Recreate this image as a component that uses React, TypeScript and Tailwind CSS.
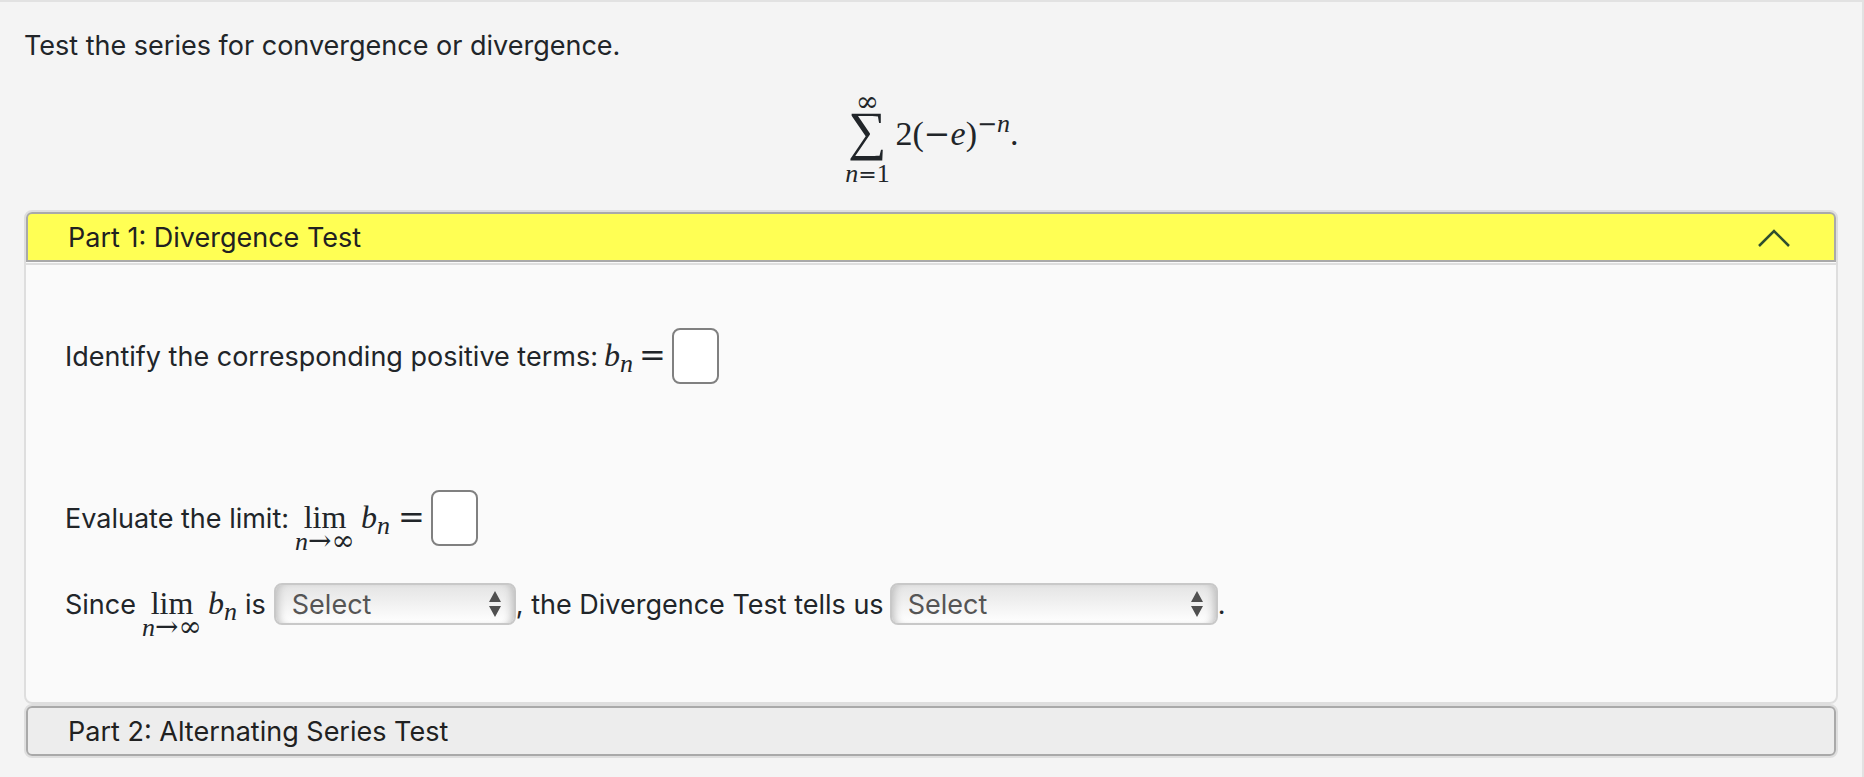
import { useState } from "react";
import type { ReactNode } from "react";

const serif = "font-['Liberation_Serif','DejaVu_Serif',serif]";
const operator = "font-['DejaVu_Serif','Liberation_Serif',serif] not-italic";

function Bn() {
  return (
    <span className={`${serif} text-[32px] leading-10 italic`}>
      b<sub className="text-[26px] leading-none">n</sub>
    </span>
  );
}

function Equals() {
  return <span className={`${operator} text-[32px] leading-10`}>=</span>;
}

function Lim() {
  return (
    <span className={`${serif} inline-flex w-15 flex-col items-center`}>
      <span className="text-[32px] leading-8">lim</span>
      <span className="h-4 text-[26px] leading-4 whitespace-nowrap">
        <i>n</i>
        <span className={`${operator} text-[28px]`}>→∞</span>
      </span>
    </span>
  );
}

function AnswerBox({ label }: { label: string }) {
  return (
    <input
      type="text"
      aria-label={label}
      className="ml-1.5 h-14 w-[47px] rounded-lg border-2 border-[#808080] bg-white px-2 leading-10"
    />
  );
}

function Choice({ label, width, options }: { label: string; width: string; options: string[] }) {
  return (
    <span className={`relative inline-flex ${width}`}>
      <select
        aria-label={label}
        defaultValue=""
        className="h-[42px] w-full appearance-none rounded-lg border-2 border-[#c8c8c8] bg-linear-to-b from-[#e4e4e4] to-white px-4 text-[#555] shadow-[inset_8px_0_8px_-6px_#bbb,inset_-8px_0_8px_-6px_#bbb]"
      >
        <option value="">Select</option>
        {options.map((option) => (
          <option key={option}>{option}</option>
        ))}
      </select>
      <svg
        aria-hidden="true"
        viewBox="0 0 14 26"
        className="pointer-events-none absolute top-2 right-3.5 h-[26px] w-3.5 fill-[#505050]"
      >
        <path d="M7 0 13 11H1ZM7 26 1 15H13Z" />
      </svg>
    </span>
  );
}

function Part({ title, open, onToggle, children }: { title: string; open: boolean; onToggle: () => void; children?: ReactNode }) {
  return (
    <section className="rounded-lg border-2 border-[#dedede] bg-[#fafafa]">
      <h2>
        <button
          type="button"
          aria-expanded={open}
          onClick={onToggle}
          className={`flex h-[50px] w-full items-center justify-between border-2 border-[#a9a9a9] pt-0.5 pr-11 pl-10 text-left text-[#212121] ${
            open ? "rounded-t-md bg-[#ffff54]" : "rounded-md bg-[#ededed]"
          }`}
        >
          {title}
          {open && (
            <svg aria-hidden="true" viewBox="0 0 32 18" className="h-[18px] w-8 fill-none stroke-[#2f4f2f] stroke-[2.5]">
              <path d="M1 17 16 2 31 17" />
            </svg>
          )}
        </button>
      </h2>
      {open && children}
    </section>
  );
}

export default function App() {
  const [openParts, setOpenParts] = useState([true, false]);
  const toggle = (index: number) => setOpenParts(openParts.map((open, i) => (i === index ? !open : open)));

  return (
    <main className="min-h-screen border-t-2 border-r-2 border-[#e2e2e2] bg-[#f4f4f4] px-6 pt-6 pb-[19px] font-['Inter','Liberation_Sans',sans-serif] text-[27px] leading-10 text-[#212529]">
      <p>Test the series for convergence or divergence.</p>

      <div className={`${serif} mt-7 flex h-[90px] items-start justify-center text-[34px] leading-10`}>
        <span className="flex w-12 flex-col items-center text-[26px] leading-4">
          <span className={`${operator} text-[28px]`}>∞</span>
          <span className="text-[54px] leading-[42px]">∑</span>
          <span className="pt-3.5 whitespace-nowrap">
            <i>n</i>
            <span className={`${operator} text-[22px]`}>=</span>1
          </span>
        </span>
        <span className="pt-5 pl-1">
          2(<span className={`${operator} text-[32px]`}>−</span>
          <i>e</i>)
          <sup className="text-[26px]">
            <span className={`${operator} text-[24px]`}>−</span>
            <i>n</i>
          </sup>
          .
        </span>
      </div>

      <div className="mt-[26px]">
        <Part title="Part 1: Divergence Test" open={openParts[0]} onToggle={() => toggle(0)}>
          <div className="mt-px flex flex-col border-t-2 border-[#dedede] px-[39px] pt-[63px] pb-[67px]">
            <div className="flex items-baseline">
              <span className="mr-1.5">Identify the corresponding positive terms:</span>
              <Bn />
              <span className="ml-1.5">
                <Equals />
              </span>
              <AnswerBox label="Positive terms" />
            </div>
            <div className="mt-[106px] flex items-baseline">
              <span className="mr-1.5">Evaluate the limit:</span>
              <Lim />
              <span className="ml-1.5">
                <Bn />
              </span>
              <span className="ml-2">
                <Equals />
              </span>
              <AnswerBox label="Limit" />
            </div>
            <div className="mt-[34px] flex items-baseline">
              <span className="mr-1.5">Since</span>
              <Lim />
              <span className="ml-1.5">
                <Bn />
              </span>
              <span className="mx-2">is</span>
              <Choice label="Value of the limit" width="w-[242px]" options={["zero", "nonzero"]} />
              <span className="mr-1.5">, the Divergence Test tells us</span>
              <Choice label="Conclusion" width="w-[328px]" options={["the series diverges", "nothing"]} />
              <span>.</span>
            </div>
          </div>
        </Part>
        <Part title="Part 2: Alternating Series Test" open={openParts[1]} onToggle={() => toggle(1)} />
      </div>
    </main>
  );
}
